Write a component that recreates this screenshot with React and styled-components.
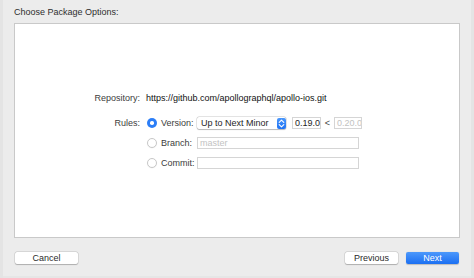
import React from "react";
import styled, { createGlobalStyle } from "styled-components";

const GlobalStyle = createGlobalStyle`
  html, body {
    margin: 0;
    padding: 0;
    background: #ececec;
  }
  body {
    font-family: "Liberation Sans", Arial, sans-serif;
    -webkit-font-smoothing: antialiased;
  }
`;

const Stepper = () => (
  <StepperBox>
    <svg width="7" height="9" viewBox="0 0 7 9" fill="none">
      <path d="M1.2 3.3 L3.5 1.2 L5.8 3.3" stroke="#fff" strokeWidth="1.1" strokeLinecap="round" strokeLinejoin="round" />
      <path d="M1.2 5.7 L3.5 7.8 L5.8 5.7" stroke="#fff" strokeWidth="1.1" strokeLinecap="round" strokeLinejoin="round" />
    </svg>
  </StepperBox>
);

const App = () => {
  return (
    <>
      <GlobalStyle />
      <Window>
        <Title>Choose Package Options:</Title>
        <Panel>
          <Form>
            <Label>Repository:</Label>
            <Value>https://github.com/apollographql/apollo-ios.git</Value>

            <Label $top>Rules:</Label>
            <Rules>
              <RuleRow>
                <Radio $checked />
                <OptionLabel>Version:</OptionLabel>
                <Popup>
                  <span>Up to Next Minor</span>
                  <Stepper />
                </Popup>
                <Field $width={29} $gap={6}>0.19.0</Field>
                <Less>&lt;</Less>
                <Field $width={28} $disabled>0.20.0</Field>
              </RuleRow>
              <RuleRow>
                <Radio />
                <OptionLabel>Branch:</OptionLabel>
                <Field $width={162} $placeholder>master</Field>
              </RuleRow>
              <RuleRow>
                <Radio />
                <OptionLabel>Commit:</OptionLabel>
                <Field $width={162} />
              </RuleRow>
            </Rules>
          </Form>
        </Panel>
        <Footer>
          <Button $width={63}>Cancel</Button>
          <Actions>
            <Button $width={53}>Previous</Button>
            <Button $width={53} $primary>Next</Button>
          </Actions>
        </Footer>
      </Window>
    </>
  );
};

export default App;

const Window = styled.div`
  width: 474px;
  height: 278px;
  box-sizing: border-box;
  padding: 0 14px;
  background: #ececec;
  box-shadow: inset 3px 0 0 #e4e4e4, inset -3px 0 0 #e4e4e4, inset 0 -2px 0 #e6e6e6;
  display: flex;
  flex-direction: column;
  white-space: nowrap;
`;

const Title = styled.div`
  height: 23px;
  box-sizing: border-box;
  padding-top: 7px;
  font-size: 9px;
  line-height: 11px;
  color: #2e2e2e;
`;

const Panel = styled.div`
  height: 215px;
  box-sizing: border-box;
  background: #fff;
  border: 1px solid #c9c9c9;
  padding-top: 68px;
`;

const Form = styled.div`
  display: grid;
  grid-template-columns: 125px auto;
  column-gap: 6px;
  row-gap: 13px;
  align-items: center;
`;

const Label = styled.div`
  text-align: right;
  font-size: 9px;
  line-height: 12px;
  color: #3c3c3c;
  align-self: ${(p) => (p.$top ? "start" : "center")};
`;

const Value = styled.div`
  font-size: 9px;
  line-height: 12px;
  color: #111;
`;

const Rules = styled.div`
  display: flex;
  flex-direction: column;
  gap: 8px;
`;

const RuleRow = styled.div`
  display: flex;
  align-items: center;
  height: 12px;
`;

const Radio = styled.span`
  box-sizing: border-box;
  width: 10px;
  height: 10px;
  margin-left: 1px;
  border-radius: 50%;
  flex-shrink: 0;
  background: ${(p) => (p.$checked ? "#2c7ef7" : "#fff")};
  border: ${(p) => (p.$checked ? "none" : "1px solid #c8c8c8")};
  box-shadow: ${(p) => (p.$checked ? "none" : "0 0.5px 1px rgba(0,0,0,0.06)")};
  position: relative;

  &::after {
    content: "";
    display: ${(p) => (p.$checked ? "block" : "none")};
    position: absolute;
    left: 3.25px;
    top: 3.25px;
    width: 3.5px;
    height: 3.5px;
    border-radius: 50%;
    background: #fff;
  }
`;

const OptionLabel = styled.span`
  flex-shrink: 0;
  width: 32px;
  margin-left: 4px;
  margin-right: 4px;
  font-size: 9px;
  line-height: 12px;
  color: #3c3c3c;
`;

const Popup = styled.div`
  flex-shrink: 0;
  box-sizing: border-box;
  width: 89px;
  height: 12px;
  display: flex;
  align-items: center;
  justify-content: space-between;
  background: #fff;
  border-radius: 2px;
  box-shadow: 0 0 0 0.5px rgba(0, 0, 0, 0.18), 0 0.5px 1px rgba(0, 0, 0, 0.2);
  padding-left: 4px;
  font-size: 9px;
  color: #1e1e1e;
`;

const StepperBox = styled.span`
  width: 9px;
  height: 11px;
  border-radius: 2px;
  background: linear-gradient(#4b97fb, #1f72f3);
  display: flex;
  align-items: center;
  justify-content: center;
  margin-right: 0.5px;
`;

const Field = styled.div`
  flex-shrink: 0;
  box-sizing: border-box;
  width: ${(p) => p.$width}px;
  height: 12px;
  margin-left: ${(p) => p.$gap || 0}px;
  border: 1px solid #d5d5d5;
  background: #fff;
  padding-left: 2px;
  font-size: 9px;
  line-height: 10px;
  color: ${(p) => (p.$disabled || p.$placeholder ? "#c2c2c2" : "#1e1e1e")};
  overflow: hidden;
`;

const Less = styled.span`
  flex-shrink: 0;
  width: 13px;
  text-align: center;
  font-size: 9px;
  color: #444;
`;

const Footer = styled.div`
  display: flex;
  justify-content: space-between;
  align-items: center;
  padding-top: 14px;
  padding-left: 1px;
`;

const Actions = styled.div`
  display: flex;
  gap: 8px;
  padding-right: 1px;
`;

const Button = styled.div`
  box-sizing: border-box;
  width: ${(p) => p.$width}px;
  height: 12px;
  border-radius: 2px;
  text-align: center;
  font-size: 9px;
  line-height: 12px;
  color: ${(p) => (p.$primary ? "#fff" : "#2a2a2a")};
  background: ${(p) => (p.$primary ? "linear-gradient(#4c98fb, #1b6ff2)" : "#fff")};
  box-shadow: ${(p) =>
    p.$primary
      ? "0 0.5px 1px rgba(0,0,0,0.2)"
      : "0 0 0 0.5px rgba(0,0,0,0.14), 0 0.5px 1px rgba(0,0,0,0.2)"};
`;
